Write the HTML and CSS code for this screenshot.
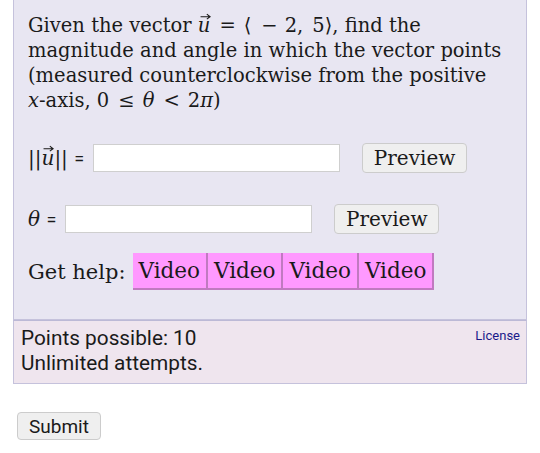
FILE: index.html
```html
<!DOCTYPE html>
<html>
<head>
<meta charset="utf-8">
<link rel="stylesheet" href="styles.css">
</head>
<body>
<div class="question">
  <p class="prompt">Given the vector <span class="vec">u<svg class="arrow" viewBox="0 0 10 6"><path d="M0.5 3.2H8.8M6.2 0.8L9.2 3.2L6.2 5.4" fill="none" stroke="#1a1a1a" stroke-width="1"/></svg></span><span class="rel">=</span><span class="m">⟨<span class="bin">−</span>2,<span class="sp"></span>5⟩</span>, find the magnitude and angle in which the vector points (measured counterclockwise from the positive <span class="nw"><i class="x">x</i>-axis,</span> <span class="m">0</span><span class="rel">≤</span><i class="m">θ</i><span class="rel">&lt;</span><span class="m">2<i>π</i></span>)</p>
  <div class="row">
    <span class="lbl"><span class="m">||<span class="vec">u<svg class="arrow" viewBox="0 0 10 6"><path d="M0.5 3.2H8.8M6.2 0.8L9.2 3.2L6.2 5.4" fill="none" stroke="#1a1a1a" stroke-width="1"/></svg></span>||</span> <span class="eq">=</span></span>
    <span class="field"></span>
    <button class="preview">Preview</button>
  </div>
  <div class="row">
    <span class="lbl"><i class="m">θ</i> <span class="eq">=</span></span>
    <span class="field"></span>
    <button class="preview">Preview</button>
  </div>
  <div class="help">
    <span class="help-label">Get help:</span>
    <span class="videos">
      <span class="video">Video</span><span class="video">Video</span><span class="video">Video</span><span class="video">Video</span>
    </span>
  </div>
</div>
<div class="footer">
  <div class="info">
    <div>Points possible: 10</div>
    <div>Unlimited attempts.</div>
  </div>
  <a class="license">License</a>
</div>
<div class="actions">
  <button class="submit">Submit</button>
</div>
</body>
</html>
```
FILE: styles.css
```css
html, body {
  margin: 0;
  padding: 0;
  background: #ffffff;
}
body {
  width: 540px;
  height: 453px;
  overflow: hidden;
  font-family: "DejaVu Serif", serif;
  color: #1a1a1a;
}
.question {
  margin-left: 13px;
  width: 514px;
  background: #e8e6f2;
  border: 1px solid #c5c2dc;
  border-top: none;
  padding: 13px 0 30px 14px;
  box-sizing: border-box;
  height: 320px;
}
.prompt {
  margin: 0;
  font-size: 19.5px;
  line-height: 25px;
  width: 490px;
}
.nw {
  white-space: nowrap;
}
.m {
  font-family: "DejaVu Serif", serif;
}
.rel {
  display: inline-block;
  margin: 0 8px 0 9px;
}
.bin {
  display: inline-block;
  margin: 0 7px 0 10px;
}
.sp {
  display: inline-block;
  width: 9px;
}
.vec {
  position: relative;
  font-style: italic;
}
.arrow {
  position: absolute;
  left: 2px;
  top: -1px;
  width: 11px;
  height: 7px;
}
.row {
  display: flex;
  align-items: center;
  margin-top: 30px;
  height: 30px;
}
.row + .row {
  margin-top: 31px;
}
.lbl {
  font-size: 20px;
  margin-right: 9px;
  white-space: nowrap;
}
.eq {
  font-family: Roboto, sans-serif;
  font-size: 18px;
}
.field {
  display: block;
  width: 247px;
  height: 28px;
  background: #ffffff;
  border: 1px solid #cfcfcf;
  box-sizing: border-box;
}
.preview {
  margin-left: 22px;
  width: 105px;
  height: 30px;
  font-family: "DejaVu Serif", serif;
  font-size: 20px;
  color: #1a1a1a;
  background: #efefef;
  border: 1px solid #cccccc;
  border-radius: 4px;
  padding: 0;
}
.help {
  display: flex;
  align-items: center;
  margin-top: 19px;
  font-size: 21px;
}
.help-label {
  margin-right: 7px;
}
.videos {
  display: flex;
}
.video {
  display: block;
  background: #ff99ff;
  border-right: 2px solid #c07ac0;
  border-bottom: 2px solid #c07ac0;
  padding: 3px 6px 2px 6px;
  line-height: 30px;
  font-size: 21.5px;
}
.footer {
  margin-left: 13px;
  width: 514px;
  box-sizing: border-box;
  border: 1px solid #c5c2dc;
  border-top: 1px solid #bcb9d6;
  background: #efe5ee;
  display: flex;
  justify-content: space-between;
  padding: 5px 6px 6px 7px;
  height: 64px;
}
.info {
  font-family: Roboto, sans-serif;
  font-size: 20.8px;
  line-height: 25px;
  color: #1a1a1a;
}
.license {
  font-family: Roboto, sans-serif;
  font-size: 13px;
  color: #1a1a8a;
  padding-top: 2px;
}
.actions {
  padding: 28px 0 0 17px;
}
.submit {
  width: 84px;
  height: 28px;
  font-family: Roboto, sans-serif;
  font-size: 19px;
  color: #1a1a1a;
  background: #efefef;
  border: 1px solid #cccccc;
  border-radius: 4px;
  padding: 0;
}
```
